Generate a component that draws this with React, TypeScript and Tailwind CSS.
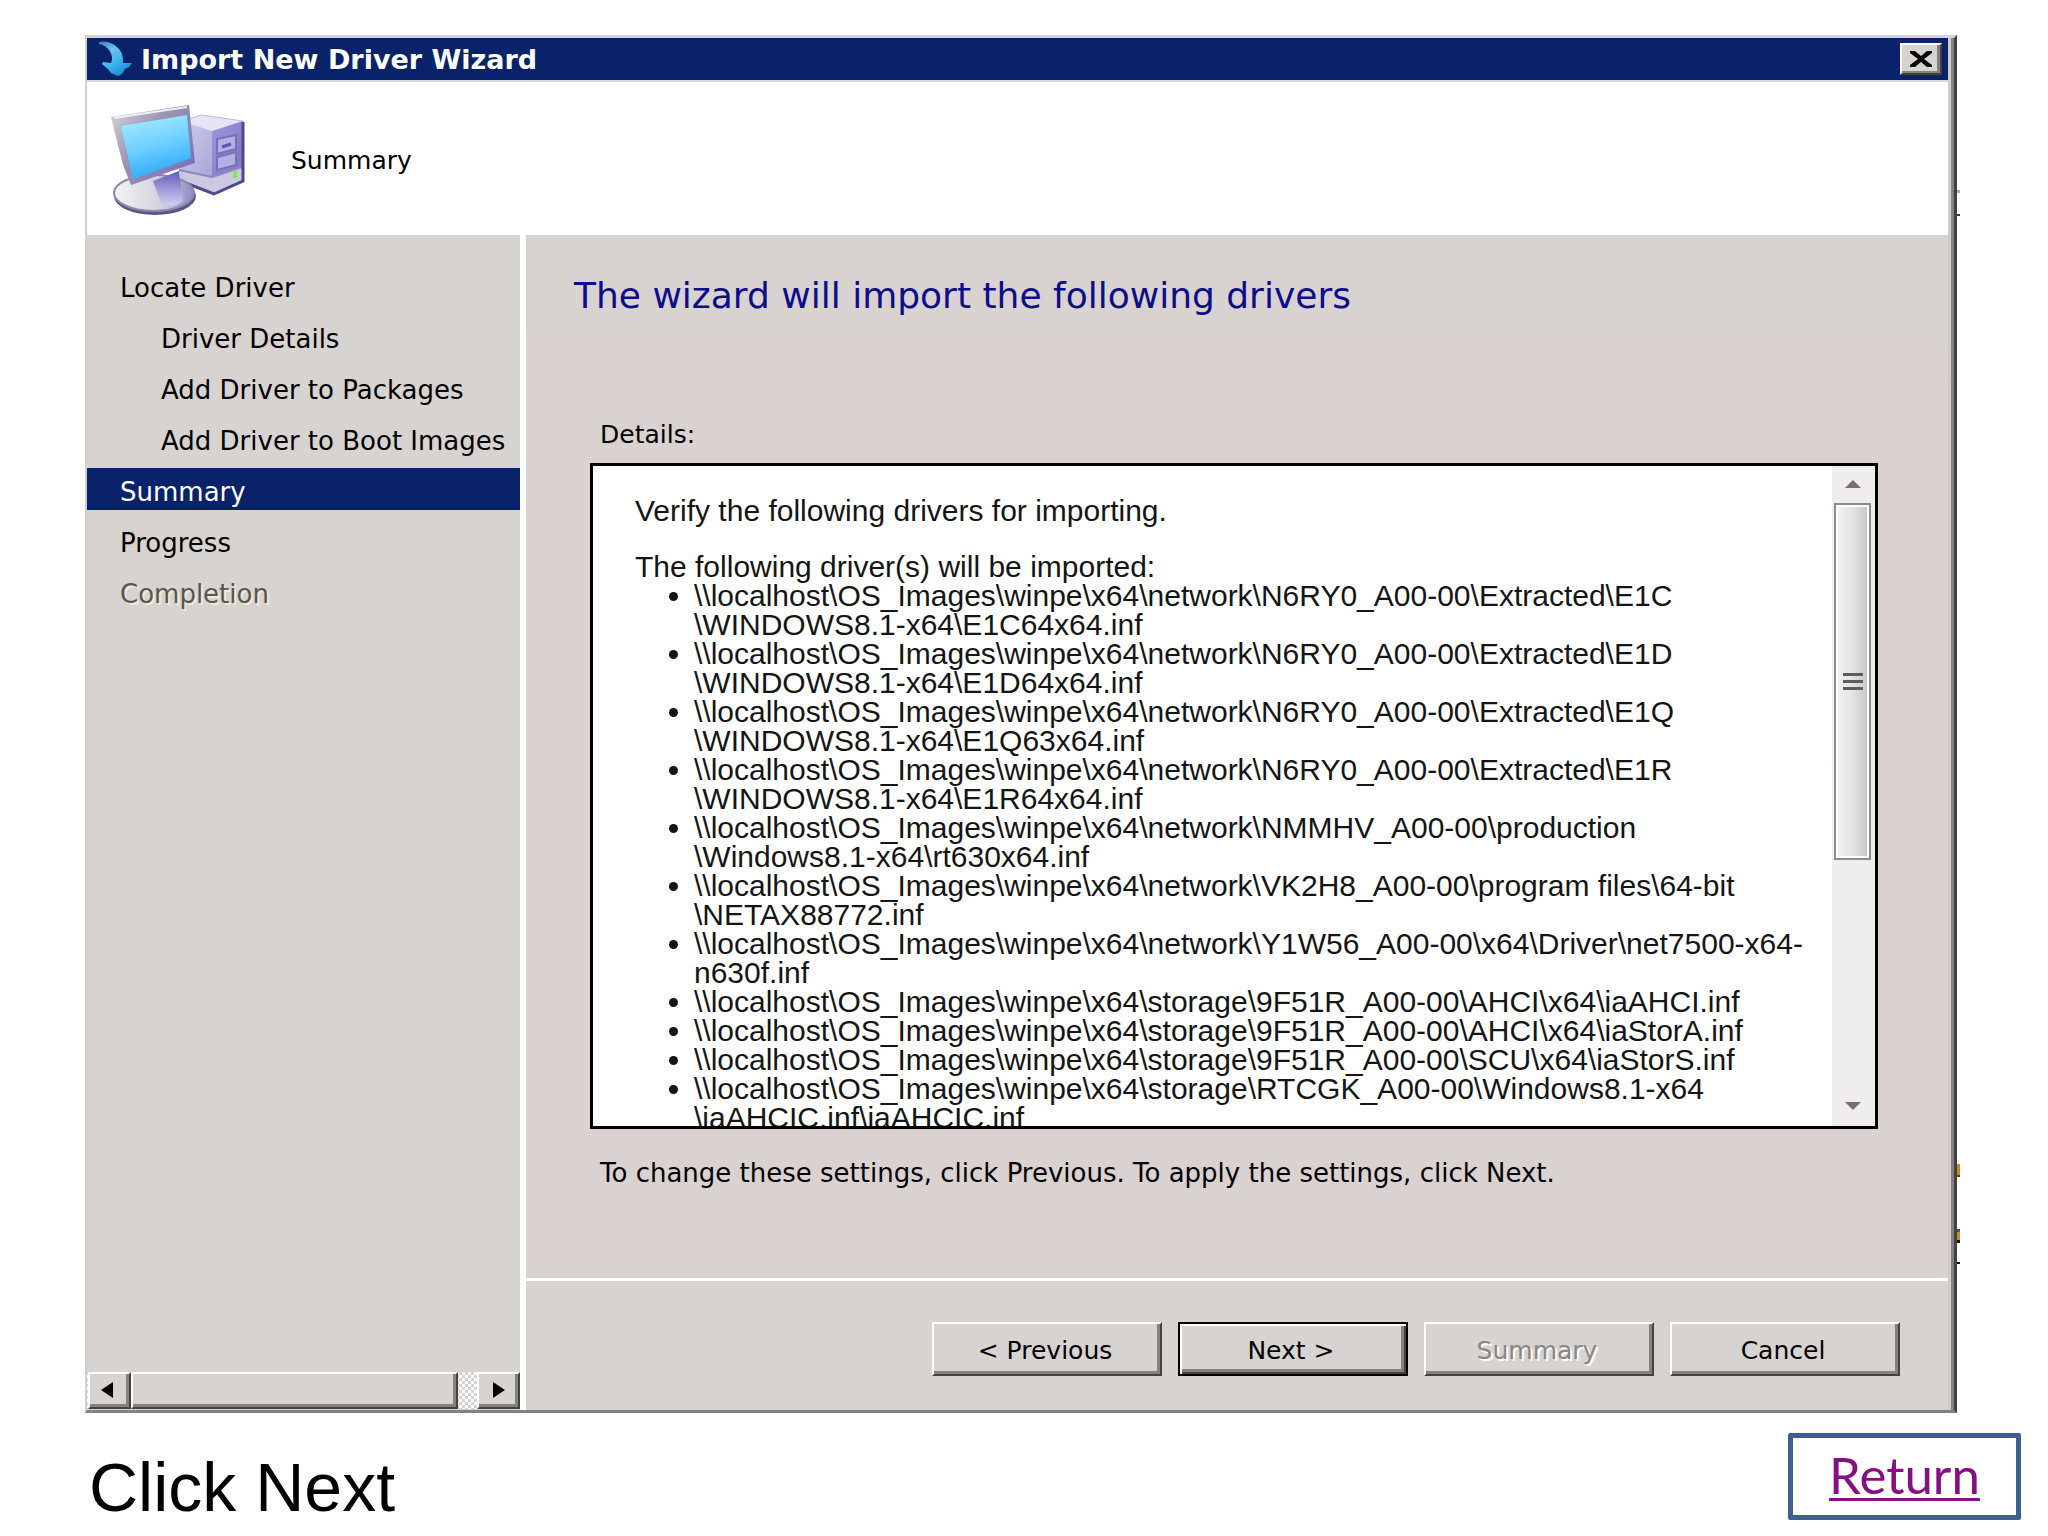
import React from "react";

const steps = [
  { label: "Locate Driver", sub: false, state: "normal" },
  { label: "Driver Details", sub: true, state: "normal" },
  { label: "Add Driver to Packages", sub: true, state: "normal" },
  { label: "Add Driver to Boot Images", sub: true, state: "normal" },
  { label: "Summary", sub: false, state: "current" },
  { label: "Progress", sub: false, state: "normal" },
  { label: "Completion", sub: false, state: "disabled" },
];

const share = "\\\\localhost\\OS_Images\\winpe\\x64\\";
const drivers: string[][] = [
  ["network\\N6RY0_A00-00\\Extracted\\E1C", "\\WINDOWS8.1-x64\\E1C64x64.inf"],
  ["network\\N6RY0_A00-00\\Extracted\\E1D", "\\WINDOWS8.1-x64\\E1D64x64.inf"],
  ["network\\N6RY0_A00-00\\Extracted\\E1Q", "\\WINDOWS8.1-x64\\E1Q63x64.inf"],
  ["network\\N6RY0_A00-00\\Extracted\\E1R", "\\WINDOWS8.1-x64\\E1R64x64.inf"],
  ["network\\NMMHV_A00-00\\production", "\\Windows8.1-x64\\rt630x64.inf"],
  ["network\\VK2H8_A00-00\\program files\\64-bit", "\\NETAX88772.inf"],
  ["network\\Y1W56_A00-00\\x64\\Driver\\net7500-x64-", "n630f.inf"],
  ["storage\\9F51R_A00-00\\AHCI\\x64\\iaAHCI.inf"],
  ["storage\\9F51R_A00-00\\AHCI\\x64\\iaStorA.inf"],
  ["storage\\9F51R_A00-00\\SCU\\x64\\iaStorS.inf"],
  ["storage\\RTCGK_A00-00\\Windows8.1-x64", "\\iaAHCIC.inf\\iaAHCIC.inf"],
];

const raised =
  "border-t-2 border-l-2 border-t-white border-l-white border-r-2 border-b-2 border-r-[#45413f] border-b-[#45413f] shadow-[inset_-3px_-3px_0_#85817f] bg-[#d7d3d0]";

function ImportArrow() {
  return (
    <svg className="h-9 w-[34px] shrink-0" viewBox="0 0 34 36" aria-hidden="true">
      <defs>
        <linearGradient id="arrow" x1="0" y1="0" x2="0.6" y2="1">
          <stop offset="0" stopColor="#3a78bc" />
          <stop offset="0.35" stopColor="#6cc3ee" />
          <stop offset="0.65" stopColor="#3fb4ee" />
          <stop offset="1" stopColor="#1f8fd6" />
        </linearGradient>
      </defs>
      <path
        d="M0 1 C7 -1 15 2 20 8 C24 13 24 17 24 22 L33 22 L30 26 L26 28 L23 33 L19 35 L12 32 L9 28 L3 23 L4 21 L12 22 C14 18 13 13 10 9 C7 5 4 4 0 3Z"
        fill="url(#arrow)"
      />
    </svg>
  );
}

function ComputerIcon() {
  return (
    <svg className="mt-1 h-[112px] w-[134px] shrink-0" viewBox="0 0 134 112" aria-hidden="true">
      <defs>
        <linearGradient id="screen" x1="0.2" y1="0" x2="0.5" y2="1">
          <stop offset="0" stopColor="#a8ecff" />
          <stop offset="0.5" stopColor="#6fd0ff" />
          <stop offset="1" stopColor="#28a8fb" />
        </linearGradient>
        <linearGradient id="frame" x1="0" y1="0" x2="1" y2="0.8">
          <stop offset="0" stopColor="#d9d7e0" />
          <stop offset="0.45" stopColor="#9a94b4" />
          <stop offset="1" stopColor="#7670c0" />
        </linearGradient>
        <linearGradient id="side" x1="0" y1="0" x2="1" y2="1">
          <stop offset="0" stopColor="#cfccec" />
          <stop offset="1" stopColor="#aaa6d8" />
        </linearGradient>
        <linearGradient id="front" x1="0" y1="0" x2="1" y2="1">
          <stop offset="0" stopColor="#9d98dd" />
          <stop offset="1" stopColor="#7a74c0" />
        </linearGradient>
        <linearGradient id="foot" x1="0" y1="0" x2="1" y2="0">
          <stop offset="0" stopColor="#f4f3f5" />
          <stop offset="0.6" stopColor="#d2d0da" />
          <stop offset="1" stopColor="#8f88c4" />
        </linearGradient>
        <linearGradient id="neck" x1="0" y1="0" x2="0" y2="1">
          <stop offset="0" stopColor="#5f58b8" />
          <stop offset="0.6" stopColor="#a9a4de" />
          <stop offset="1" stopColor="#d3d0f0" />
        </linearGradient>
      </defs>
      <path d="M78 14 L90 10 L132 16 L131 20 L101 27 L78 22Z" fill="#e6e4f6" stroke="#bdb9dc" strokeWidth="1" />
      <path d="M76 18 L101 26 L101 72 L68 66Z" fill="url(#side)" />
      <path d="M101 26 L132 16 L132 70 L101 72Z" fill="url(#front)" />
      <path d="M68 65 L101 72 L131 62 L131 76 L103 88 L70 77Z" fill="#cbc8e0" />
      <path d="M68 65 L101 72 L131 62" fill="none" stroke="#8d88bf" strokeWidth="2" />
      <path d="M132 17 V76 L103 89 L72 77" fill="none" stroke="#4f4988" strokeWidth="3" />
      <path d="M106 34 L125 30 L125 44 L106 49Z" fill="#b4b0e2" stroke="#7771bd" strokeWidth="2" />
      <path d="M106 52 L125 47 L125 60 L106 65Z" fill="#b4b0e2" stroke="#7771bd" strokeWidth="2" />
      <path d="M111 42 L120 39" stroke="#5d57a5" strokeWidth="3" />
      <rect x="122" y="66" width="4" height="7" fill="#86e65a" />
      <ellipse cx="44" cy="91" rx="41" ry="19" fill="#5b5486" />
      <ellipse cx="43" cy="88" rx="40" ry="18" fill="url(#foot)" stroke="#8d88a8" strokeWidth="2" />
      <path d="M42 76 L68 66 L72 96 Q60 105 50 98Z" fill="url(#neck)" />
      <path d="M0 12 L78 0 L84 58 L20 80 L12 60Z" fill="url(#frame)" />
      <path d="M3 13 L76 2" stroke="#f1f0f4" strokeWidth="2" />
      <path d="M10 21 L76 10 L80 53 L22 74Z" fill="url(#screen)" />
    </svg>
  );
}

function WizardButton({ label, kind }: { label: string; kind: "normal" | "primary" | "disabled" }) {
  return (
    <button
      type="button"
      disabled={kind === "disabled"}
      className={
        "flex h-[54px] w-[230px] items-center justify-center pt-1 pr-1 text-[25px] leading-8 whitespace-nowrap " +
        (kind === "primary"
          ? "border-2 border-black bg-[#d7d3d0] shadow-[inset_2px_2px_0_#fff,inset_-2px_-2px_0_#45413f,inset_-5px_-5px_0_#85817f]"
          : raised) +
        (kind === "disabled" ? " text-[#8a8683] [text-shadow:2px_2px_0_#fff]" : " text-black")
      }
    >
      {label}
    </button>
  );
}

export default function App() {
  return (
    <div className="min-h-screen bg-white pt-[35px] font-['DejaVu_Sans',Verdana,sans-serif] text-black">
      <section className="relative mr-[91px] ml-[85px] flex flex-col border-t-[3px] border-r-[3px] border-b-[3px] border-l-2 border-t-[#d6d3d0] border-r-[#45413f] border-b-[#85817f] border-l-[#d0d0d2]">
        <svg className="absolute top-0 -right-[6px] h-[1240px] w-[3px]" viewBox="0 0 3 1240" aria-hidden="true">
          <rect y="152" width="3" height="3" fill="#a9a9ad" />
          <rect y="176" width="3" height="2" fill="#3c3c48" />
          <rect y="1126" width="3" height="11" fill="#cf8415" />
          <rect y="1137" width="3" height="2" fill="#6b3d0a" />
          <rect y="1191" width="3" height="3" fill="#4a4f6a" />
          <rect y="1194" width="3" height="8" fill="#c98a22" />
          <rect y="1202" width="3" height="3" fill="#111" />
          <rect y="1224" width="3" height="2" fill="#111" />
        </svg>
        <div className="flex flex-col border-r-[3px] border-[#85817f]">
          <div className="flex flex-col border-r-[3px] border-[#d0cdcb]">
            <header className="flex h-[44px] items-center border-b-2 border-[#d3dde0] bg-[#0a2269] pr-[6px] pl-3">
              <ImportArrow />
              <h1 className="ml-2 flex-1 pt-[2px] text-[27px] leading-8 font-bold text-white">Import New Driver Wizard</h1>
              <button
                type="button"
                aria-label="Close"
                className="flex h-8 w-[42px] items-center justify-center border-2 border-t-white border-r-[#45413f] border-b-[#45413f] border-l-white bg-[#d7d3d0] shadow-[inset_-3px_-2px_0_#85817f]"
              >
                <svg className="h-4 w-[22px]" viewBox="0 0 22 16" aria-hidden="true">
                  <path d="M0 0 H5 L11 5 L17 0 H22 V2 L14 8 L22 14 V16 H17 L11 11 L5 16 H0 V14 L8 8 L0 2Z" />
                </svg>
              </button>
            </header>
            <div className="flex h-[153px] items-center bg-white pl-6">
              <ComputerIcon />
              <p className="mt-1 ml-[46px] text-[25px] leading-8">Summary</p>
            </div>
            <div className="flex h-[1175px]">
              <nav className="flex w-[439px] shrink-0 flex-col justify-between border-r-6 border-white bg-[#d7d3d0] pt-[29px]">
                <ul className="flex flex-col gap-[9px] text-[26px] leading-8">
                  {steps.map((s) => (
                    <li
                      key={s.label}
                      aria-current={s.state === "current" ? "step" : undefined}
                      className={
                        "flex h-[42px] items-center pt-[6px] whitespace-nowrap " +
                        (s.sub ? "pl-[74px] " : "pl-[33px] ") +
                        (s.state === "current" ? "bg-[#0a2269] text-white" : "") +
                        (s.state === "disabled" ? "text-[#5a564c] [text-shadow:2px_2px_0_#efeadd]" : "")
                      }
                    >
                      {s.label}
                    </li>
                  ))}
                </ul>
                <div className="mb-[1px] flex h-[37px] bg-[repeating-conic-gradient(#fff_0_25%,#d7d3d0_0_50%)] bg-[size:6px_6px] pl-[1px]">
                  <button type="button" aria-label="Scroll left" className={"flex w-[43px] items-center justify-center pr-[6px] pb-[2px] " + raised}>
                    <svg className="h-4 w-3" viewBox="0 0 12 16" aria-hidden="true">
                      <path d="M12 0 V16 L0 8Z" />
                    </svg>
                  </button>
                  <div className={"w-[327px] " + raised} />
                  <div className="flex-1" />
                  <button type="button" aria-label="Scroll right" className={"flex w-[43px] items-center justify-center pb-[2px] " + raised}>
                    <svg className="h-4 w-3" viewBox="0 0 12 16" aria-hidden="true">
                      <path d="M0 0 V16 L12 8Z" />
                    </svg>
                  </button>
                </div>
              </nav>
              <div className="flex min-w-0 flex-1 flex-col">
                <main className="flex flex-1 flex-col bg-linear-to-b from-[#d7d3d0] to-[#dad2d0] to-15% pr-[70px] pl-16">
                  <h2 className="-ml-4 pt-[37px] text-[36px] leading-[48px] text-[#0d0d8c]">
                    The wizard will import the following drivers
                  </h2>
                  <p className="mt-[99px] ml-[10px] text-[25px] leading-8">Details:</p>
                  <div className="mt-3 flex h-[666px] overflow-hidden border-3 border-black bg-white">
                    <div className="min-w-0 flex-1 overflow-hidden pt-[30px] pl-[42px] font-['Liberation_Sans',Arial,sans-serif] text-[30px] leading-[29px] whitespace-nowrap text-[#151515]">
                      <p>Verify the following drivers for importing.</p>
                      <p className="mt-[27px]">The following driver(s) will be imported:</p>
                      <ul className="list-disc pl-[59px]">
                        {drivers.map(([first, second]) => (
                          <li key={first}>
                            {share + first}
                            {second && <br />}
                            {second}
                          </li>
                        ))}
                      </ul>
                    </div>
                    <div className="flex w-[43px] flex-col items-center bg-[#efeded] py-[14px] pr-[2px]">
                      <svg className="h-2 w-4 shrink-0" viewBox="0 0 16 8" aria-hidden="true">
                        <path d="M0 8 L8 0 L16 8Z" fill="#77706f" />
                      </svg>
                      <div className="mt-[15px] flex h-[357px] w-[37px] flex-col items-center justify-center gap-1 border-2 border-[#8e8b8c] bg-linear-to-r from-[#f4f3f4] from-0% via-[#e4e2e4] via-50% to-[#c4c2c4] shadow-[inset_0_0_0_2px_#fff]">
                        <i className="h-[3px] w-5 bg-[#5f5c5d]" />
                        <i className="h-[3px] w-5 bg-[#5f5c5d]" />
                        <i className="h-[3px] w-5 bg-[#5f5c5d]" />
                      </div>
                      <svg className="mt-auto mb-[2px] h-2 w-4 shrink-0" viewBox="0 0 16 8" aria-hidden="true">
                        <path d="M0 0 L8 8 L16 0Z" fill="#77706f" />
                      </svg>
                    </div>
                  </div>
                  <p className="mt-7 ml-[10px] text-[26px] leading-8 whitespace-nowrap">
                    To change these settings, click Previous. To apply the settings, click Next.
                  </p>
                </main>
                <footer className="flex h-[132px] items-start justify-end gap-4 border-t-3 border-white bg-[#d7d3d0] pt-[41px] pr-12">
                  <WizardButton label="< Previous" kind="normal" />
                  <WizardButton label="Next >" kind="primary" />
                  <WizardButton label="Summary" kind="disabled" />
                  <WizardButton label="Cancel" kind="normal" />
                </footer>
              </div>
            </div>
          </div>
        </div>
      </section>
      <footer className="flex items-start justify-between pr-[27px] pl-[89px]">
        <p className="pt-9 font-['Liberation_Sans',Arial,sans-serif] text-[68px] leading-[76px]">Click Next</p>
        <a
          href="#return"
          className="mt-5 flex h-[87px] w-[233px] items-center justify-center rounded-xs border-5 border-[#3d6091] pb-1 font-['Lato',sans-serif] text-[51px] leading-[60px] text-[#860f84] underline decoration-3 underline-offset-4"
        >
          Return
        </a>
      </footer>
    </div>
  );
}
